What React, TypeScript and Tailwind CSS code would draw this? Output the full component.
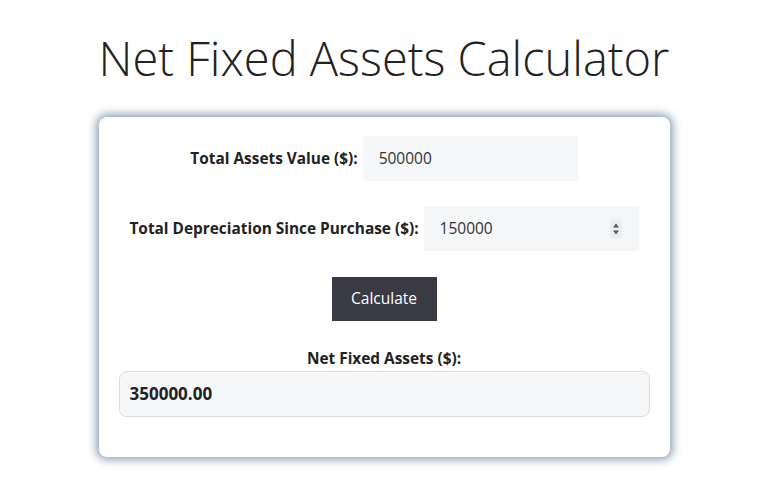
import React from "react";

export default function App() {
  return (
    <div className="w-[768px] h-[499px] bg-white" style={{ fontFamily: '"Open Sans", "Noto Sans", sans-serif' }}>
      <h1 className="pt-[29px] text-center text-[47px] leading-[58px] font-light text-[#222]">Net Fixed Assets Calculator</h1>
      <div className="mx-auto mt-[30px] w-[571px] rounded-[8px] bg-white px-5 pt-[19px] pb-[40px] shadow-[0_0_8px_3px_rgba(85,115,150,0.65)]">
        <div className="flex items-center justify-center gap-[5px]">
          <label className="text-[15.4px] font-bold text-[#222]">Total Assets Value ($):</label>
          <div className="flex h-[45px] w-[215px] items-center bg-[#f5f6f8] px-4 text-[15.5px] text-[#333]">500000</div>
        </div>
        <div className="mt-[25px] flex items-center justify-center gap-[5px]">
          <label className="text-[15.4px] font-bold text-[#222]">Total Depreciation Since Purchase ($):</label>
          <div className="flex h-[45px] w-[215px] items-center justify-between bg-[#f5f6f8] pl-4 pr-[17px] text-[15.5px] text-[#333]">
            <span>150000</span>
            <div className="flex h-[20px] w-[12px] items-center justify-center rounded-[2px] bg-[#eceef1]">
              <svg width="8" height="16" viewBox="0 0 8 16">
                <path d="M4 2.5 L7 6.5 L1 6.5 Z" fill="#555" />
                <path d="M1 9.5 L7 9.5 L4 13.5 Z" fill="#555" />
              </svg>
            </div>
          </div>
        </div>
        <div className="mt-[26px] flex justify-center">
          <button className="h-[44px] w-[105px] bg-[#3a3a44] text-[15.5px] text-white">Calculate</button>
        </div>
        <div className="mt-[27px] text-center text-[15.4px] font-bold leading-[22px] text-[#222]">Net Fixed Assets ($):</div>
        <div className="mt-[1px] flex h-[46px] items-center rounded-[8px] border border-[#dcdcdc] bg-[#f6f7f8] px-[10px] text-[17px] font-bold text-[#222]">350000.00</div>
      </div>
    </div>
  );
}
